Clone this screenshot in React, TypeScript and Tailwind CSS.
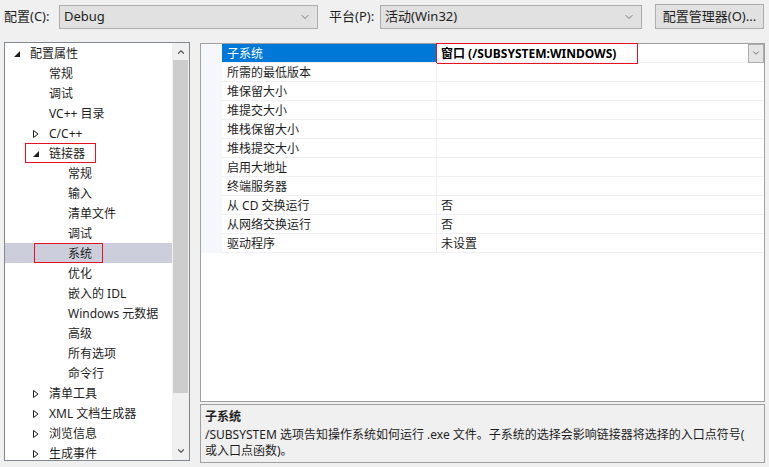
import { ChevronDown, ChevronUp } from 'lucide-react';

const font = { fontFamily: '"Noto Sans", "Noto Sans CJK SC", sans-serif' };

type Node = { label: string; level: number; arrow?: 'open' | 'closed'; selected?: boolean; boxed?: boolean };

const tree: Node[] = [
  { label: '配置属性', level: 0, arrow: 'open' },
  { label: '常规', level: 1 },
  { label: '调试', level: 1 },
  { label: 'VC++ 目录', level: 1 },
  { label: 'C/C++', level: 1, arrow: 'closed' },
  { label: '链接器', level: 1, arrow: 'open', boxed: true },
  { label: '常规', level: 2 },
  { label: '输入', level: 2 },
  { label: '清单文件', level: 2 },
  { label: '调试', level: 2 },
  { label: '系统', level: 2, selected: true, boxed: true },
  { label: '优化', level: 2 },
  { label: '嵌入的 IDL', level: 2 },
  { label: 'Windows 元数据', level: 2 },
  { label: '高级', level: 2 },
  { label: '所有选项', level: 2 },
  { label: '命令行', level: 2 },
  { label: '清单工具', level: 1, arrow: 'closed' },
  { label: 'XML 文档生成器', level: 1, arrow: 'closed' },
  { label: '浏览信息', level: 1, arrow: 'closed' },
  { label: '生成事件', level: 1, arrow: 'closed' },
];

const props: [string, string][] = [
  ['子系统', '窗口 (/SUBSYSTEM:WINDOWS)'],
  ['所需的最低版本', ''],
  ['堆保留大小', ''],
  ['堆提交大小', ''],
  ['堆栈保留大小', ''],
  ['堆栈提交大小', ''],
  ['启用大地址', ''],
  ['终端服务器', ''],
  ['从 CD 交换运行', '否'],
  ['从网络交换运行', '否'],
  ['驱动程序', '未设置'],
];

function Arrow({ kind }: { kind: 'open' | 'closed' }) {
  if (kind === 'open') {
    return (
      <svg width="8" height="8" viewBox="0 0 8 8">
        <polygon points="7,1 7,7 1,7" fill="#1e1e1e" />
      </svg>
    );
  }
  return (
    <svg width="8" height="10" viewBox="0 0 8 10">
      <polygon points="1.5,1.5 6,5 1.5,8.5" fill="none" stroke="#1e1e1e" strokeWidth="1" />
    </svg>
  );
}

function Combo({ value, width }: { value: string; width: string }) {
  return (
    <div className={`${width} h-[24px] flex items-center justify-between border border-[#adadad] bg-[#e1e1e1] pl-[4px] pr-[6px] text-[13px] text-[#1e1e1e]`}>
      <span>{value}</span>
      <ChevronDown className="w-[12px] h-[12px] text-[#555]" strokeWidth={1.5} />
    </div>
  );
}

export default function App() {
  return (
    <div className="w-[769px] h-[467px] bg-[#f0f0f0] overflow-hidden text-[12px] text-[#1e1e1e]" style={font}>
      <div className="h-[42px] flex items-start pt-[5px] pl-[4px]">
        <span className="w-[55px] h-[24px] flex items-center text-[13px]">配置(C):</span>
        <Combo value="Debug" width="w-[259px]" />
        <span className="ml-[11px] w-[51px] h-[24px] flex items-center text-[13px]">平台(P):</span>
        <Combo value="活动(Win32)" width="w-[262px]" />
        <button className="ml-[13px] -mt-[1px] w-[109px] h-[25px] border border-[#adadad] bg-[#e1e1e1] text-[13px] flex items-center justify-center">
          配置管理器(O)...
        </button>
      </div>

      <div className="flex items-start pl-[4px]">
        <div className="w-[186px] h-[419px] border border-[#828790] bg-white flex">
          <div className="flex-1 flex flex-col overflow-hidden">
            {tree.map((n, i) => (
              <div
                key={i}
                className={`h-[20px] shrink-0 flex items-center relative pt-[1px] ${n.selected ? 'bg-[#cccedb]' : ''}`}
                style={{ paddingLeft: 8 + n.level * 19 }}
              >
                <span className="w-[15px] flex items-center">{n.arrow && <Arrow kind={n.arrow} />}</span>
                <span className="ml-[2px] whitespace-nowrap">{n.label}</span>
                {n.boxed && (
                  <span
                    className="absolute top-0 bottom-0 border border-[#e81123] pointer-events-none"
                    style={n.selected ? { left: 29, width: 69 } : { left: 20, width: 71 }}
                  />
                )}
              </div>
            ))}
          </div>
          <div className="w-[17px] bg-[#f0f0f0] flex flex-col items-center">
            <div className="h-[17px] flex items-center justify-center">
              <ChevronUp className="w-[10px] h-[10px] text-[#606060]" strokeWidth={3} />
            </div>
            <div className="w-[15px] h-[333px] bg-[#cdcdcd]" />
            <div className="flex-1" />
            <div className="h-[17px] flex items-center justify-center mb-[1px]">
              <ChevronDown className="w-[10px] h-[10px] text-[#606060]" strokeWidth={3} />
            </div>
          </div>
        </div>

        <div className="ml-[10px] mt-[1px] flex flex-col gap-[2px]">
          <div className="w-[565px] h-[359px] border border-[#a0a0a0] bg-white">
            <div className="flex flex-col">
              {props.map(([name, value], i) => (
                <div key={i} className="h-[19px] flex">
                  <div className="w-[21px] bg-[#f5f7fc]" />
                  <div
                    className={`w-[214px] flex items-center pl-[5px] pt-[2px] border-b border-[#f0f0f2] ${
                      i === 0 ? 'bg-[#0078d7] text-white' : ''
                    }`}
                  >
                    {name}
                  </div>
                  <div className="flex-1 flex items-center justify-between pl-[4px] border-b border-l border-[#f0f0f2] relative">
                    <span className={`pt-[2px] ${i === 0 ? 'font-bold text-black' : ''}`}>{value}</span>
                    {i === 0 && (
                      <>
                        <span className="absolute -left-[1px] -top-[1px] w-[202px] h-[21px] border border-[#e81123]" />
                        <span className="w-[16px] h-[19px] border border-[#adadad] bg-[#e5e5e5] flex items-center justify-center">
                          <ChevronDown className="w-[10px] h-[10px] text-[#555]" strokeWidth={2} />
                        </span>
                      </>
                    )}
                  </div>
                </div>
              ))}
            </div>
          </div>
          <div className="w-[565px] h-[59px] border border-[#a0a0a0] bg-[#f0f0f0] px-[4px] pt-[1px]">
            <div className="font-bold text-[12px] h-[21px] flex items-center">子系统</div>
            <div className="text-[12px] leading-[16px]">
              /SUBSYSTEM 选项告知操作系统如何运行 .exe 文件。子系统的选择会影响链接器将选择的入口点符号(
              <br />
              或入口点函数)。
            </div>
          </div>
        </div>
      </div>
    </div>
  );
}
